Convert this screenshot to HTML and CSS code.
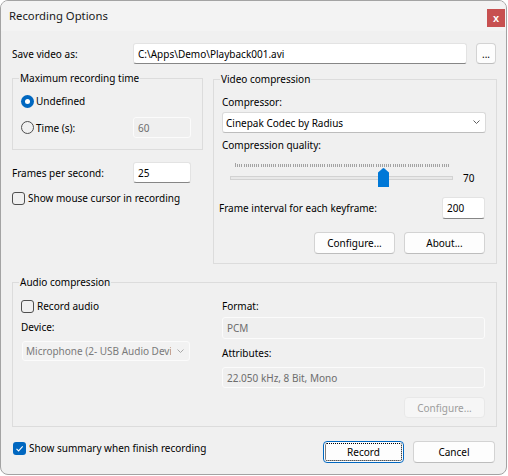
FILE: index.html
```html
<!DOCTYPE html>
<html lang="en">
<head>
    <meta charset="UTF-8">
    <meta name="viewport" content="width=device-width, initial-scale=1.0">
    <title>Recording Options</title>
    <link rel="stylesheet" href="styles.css">
</head>
<body>
<div class="window">
    <div class="titlebar">
        <span class="title">Recording Options</span>
        <button class="close">x</button>
    </div>

    <div class="content">
        <div class="row save-row">
            <label class="label-col" for="path">Save video as:</label>
            <input class="text path" type="text" id="path" value="C:\Apps\Demo\Playback001.avi">
            <button class="btn browse">...</button>
        </div>

        <div class="middle">
            <div>
                <fieldset class="group time-group">
                    <legend>Maximum recording time</legend>
                    <label class="option first"><span class="radio on"></span>Undefined</label>
                    <div class="option time-row">
                        <label class="option"><span class="radio"></span>Time (s):</label>
                        <input class="text small" type="text" value="60" disabled>
                    </div>
                </fieldset>

                <div class="row fps-row">
                    <label class="label-col" for="fps">Frames per second:</label>
                    <input class="text small" type="text" id="fps" value="25">
                </div>
                <label class="check-row cursor-check"><span class="check"></span>Show mouse cursor in recording</label>
            </div>

            <fieldset class="group video-group">
                <legend>Video compression</legend>
                <div class="field-label compressor">Compressor:</div>
                <div class="combo">
                    <span class="combo-text">Cinepak Codec by Radius</span>
                    <svg class="chevron" width="8" height="5" viewBox="0 0 8 5"><path d="M0.5 0.5L3.5 3.5L6.5 0.5"/></svg>
                </div>
                <div class="field-label quality">Compression quality:</div>
                <div class="slider-row">
                    <svg class="slider" width="235" height="36" viewBox="0 0 235 36">
                        <!-- 101 ticks, 0..100 -->
                        <path class="ticks" d="M13.5 10v4
                            m2.13-3v3 m2.13-3v3 m2.13-3v3 m2.13-3v3 m2.13-3v3 m2.13-3v3 m2.13-3v3 m2.13-3v3 m2.13-3v3 m2.13-3v3
                            m2.13-3v3 m2.13-3v3 m2.13-3v3 m2.13-3v3 m2.13-3v3 m2.13-3v3 m2.13-3v3 m2.13-3v3 m2.13-3v3 m2.13-3v3
                            m2.13-3v3 m2.13-3v3 m2.13-3v3 m2.13-3v3 m2.13-3v3 m2.13-3v3 m2.13-3v3 m2.13-3v3 m2.13-3v3 m2.13-3v3
                            m2.13-3v3 m2.13-3v3 m2.13-3v3 m2.13-3v3 m2.13-3v3 m2.13-3v3 m2.13-3v3 m2.13-3v3 m2.13-3v3 m2.13-3v3
                            m2.13-3v3 m2.13-3v3 m2.13-3v3 m2.13-3v3 m2.13-3v3 m2.13-3v3 m2.13-3v3 m2.13-3v3 m2.13-3v3 m2.13-3v3
                            m2.13-3v3 m2.13-3v3 m2.13-3v3 m2.13-3v3 m2.13-3v3 m2.13-3v3 m2.13-3v3 m2.13-3v3 m2.13-3v3 m2.13-3v3
                            m2.13-3v3 m2.13-3v3 m2.13-3v3 m2.13-3v3 m2.13-3v3 m2.13-3v3 m2.13-3v3 m2.13-3v3 m2.13-3v3 m2.13-3v3
                            m2.13-3v3 m2.13-3v3 m2.13-3v3 m2.13-3v3 m2.13-3v3 m2.13-3v3 m2.13-3v3 m2.13-3v3 m2.13-3v3 m2.13-3v3
                            m2.13-3v3 m2.13-3v3 m2.13-3v3 m2.13-3v3 m2.13-3v3 m2.13-3v3 m2.13-3v3 m2.13-3v3 m2.13-3v3 m2.13-3v3
                            m2.13-3v3 m2.13-3v3 m2.13-3v3 m2.13-3v3 m2.13-3v3 m2.13-3v3 m2.13-3v3 m2.13-3v3 m2.13-3v3 m2.13-3v3"/>
                        <rect class="track" x="8.5" y="23.5" width="222" height="3"/>
                        <path class="thumb" d="M156 34V19.5L160.6 15.4Q161.5 14.6 162.4 15.4L167 19.5V34Z"/>
                    </svg>
                    <span class="slider-value">70</span>
                </div>
                <div class="row keyframe-row">
                    <label class="keyframe-label" for="keyframe">Frame interval for each keyframe:</label>
                    <input class="text keyframe" type="text" id="keyframe" value="200">
                </div>
                <div class="button-row">
                    <button class="btn">Configure...</button>
                    <button class="btn">About...</button>
                </div>
            </fieldset>
        </div>

        <fieldset class="group audio-group">
            <legend>Audio compression</legend>
            <div class="audio-grid">
                <div>
                    <label class="check-row audio-check"><span class="check"></span>Record audio</label>
                    <div class="field-label device">Device:</div>
                    <div class="combo disabled device-combo">
                        <span class="combo-text">Microphone (2- USB Audio Device)</span>
                        <svg class="chevron" width="8" height="5" viewBox="0 0 8 5"><path d="M0.5 0.5L3.5 3.5L6.5 0.5"/></svg>
                    </div>
                </div>
                <div>
                    <div class="field-label format">Format:</div>
                    <input class="text wide format-box" type="text" value="PCM" disabled>
                    <div class="field-label attributes">Attributes:</div>
                    <input class="text wide attr-box" type="text" value="22.050 kHz, 8 Bit, Mono" disabled>
                    <div class="button-row audio-buttons">
                        <button class="btn" disabled>Configure...</button>
                    </div>
                </div>
            </div>
        </fieldset>

        <div class="footer">
            <label class="check-row summary">
                <span class="check on"><svg width="11" height="11" viewBox="0 0 11 11"><path d="M2.5 5.8L4.6 7.9L8.7 3.4"/></svg></span>Show summary when finish recording
            </label>
            <div class="footer-buttons">
                <button class="btn default record">Record</button>
                <button class="btn cancel">Cancel</button>
            </div>
        </div>
    </div>
</div>
</body>
</html>
```

FILE: styles.css
```css
body {
    margin: 0;
    background-color: #ffffff;
    font-family: "Noto Sans", sans-serif;
    font-size: 10px;
    color: #000000;
}
.window {
    width: 507px;
    height: 475px;
    box-sizing: border-box;
    border: 1px solid #a3a3a3;
    border-radius: 8px;
    background-color: #f0f0f0;
    overflow: hidden;
    display: flex;
    flex-direction: column;
}
.titlebar {
    height: 30px;
    flex-shrink: 0;
    background-color: #f3f3f3;
    display: flex;
    justify-content: space-between;
    align-items: flex-start;
}
.title {
    padding: 7px 0 0 8px;
    font-size: 11.3px;
    line-height: 16px;
    color: #1a1a1a;
}
.close {
    margin: 8px 1px 0 0;
    width: 18px;
    height: 18px;
    padding: 0;
    border: none;
    background-color: #c75050;
    color: #ffffff;
    font: bold 11px "Liberation Sans", sans-serif;
    line-height: 16px;
}
.content {
    padding: 12px 9px 0 11px;
}
.row {
    display: flex;
    align-items: center;
}
.label-col {
    width: 121px;
    flex-shrink: 0;
    line-height: 16px;
}
.text {
    box-sizing: border-box;
    height: 21px;
    margin: 0;
    padding: 0 4px;
    border: 1px solid #e3e3e3;
    border-bottom-color: #868686;
    border-radius: 3px;
    background-color: #ffffff;
    font: inherit;
    color: #000000;
    outline: none;
}
.text:disabled {
    background-color: #efefef;
    border-color: #fbfbfb;
    color: #6d6d6d;
}
.path {
    width: 334px;
}
.btn {
    box-sizing: border-box;
    height: 22px;
    padding: 0;
    border: 1px solid #d3d3d3;
    border-bottom-color: #bdbdbd;
    border-radius: 4px;
    background-color: #fdfdfd;
    font: inherit;
    color: #000000;
}
.btn:disabled {
    height: 21px;
    background-color: #f6f6f6;
    border-color: #e8e8e8;
    color: #9d9d9d;
}
.browse {
    width: 20px;
    height: 21px;
    margin-left: 9px;
}

/* two columns in the middle */
.middle {
    display: grid;
    grid-template-columns: 191px 284px;
    gap: 10px;
    margin-top: 6px;
    align-items: start;
}
.group {
    margin: 0;
    min-width: 0;
    border: 1px solid #dcdcdc;
    padding: 0 11px 0 8px;
}
.group legend {
    padding: 0 1px;
    margin-left: -2px;
    line-height: 16px;
}
.time-group {
    padding-bottom: 11px;
}
.option {
    display: flex;
    align-items: center;
    line-height: 16px;
}
.option.first {
    margin-top: 7px;
}
.time-row {
    margin-top: 8px;
    height: 21px;
}
.radio {
    width: 13px;
    height: 13px;
    box-sizing: border-box;
    flex-shrink: 0;
    margin-right: 2px;
    border: 1px solid #4f4f4f;
    border-radius: 50%;
}
.radio.on {
    border: none;
    background-color: #0067c0;
    display: flex;
    align-items: center;
    justify-content: center;
}
.radio.on::after {
    content: "";
    width: 5px;
    height: 5px;
    border-radius: 50%;
    background-color: #ffffff;
}
.small {
    width: 58px;
}
.time-row .small {
    margin-left: auto;
}
.fps-row {
    margin-top: 12px;
}
.check-row {
    display: flex;
    align-items: center;
    line-height: 16px;
}
.cursor-check {
    margin-top: 7px;
}
.check {
    width: 13px;
    height: 13px;
    box-sizing: border-box;
    flex-shrink: 0;
    margin-right: 3px;
    border: 1px solid #4f4f4f;
    border-radius: 3px;
}
.check.on {
    border: none;
    background-color: #0067c0;
    display: flex;
    align-items: center;
    justify-content: center;
}
.check.on svg path {
    fill: none;
    stroke: #ffffff;
    stroke-width: 1.1;
}

/* video compression */
.video-group {
    margin-top: 1px;
    padding-bottom: 9px;
}
.field-label {
    line-height: 16px;
}
.compressor {
    margin-top: 7px;
}
.combo {
    box-sizing: border-box;
    height: 21px;
    margin-top: 2px;
    border: 1px solid #dadada;
    border-bottom-color: #bdbdbd;
    border-radius: 3px;
    background-color: #ffffff;
    display: flex;
    align-items: center;
    width: 264px;
}
.combo-text {
    flex: 1;
    padding-left: 3px;
    white-space: nowrap;
    overflow: hidden;
}
.chevron {
    margin: 0 4px 0 6px;
}
.chevron path {
    fill: none;
    stroke: #5f5f5f;
}
.quality {
    margin-top: 4px;
}
.slider-row {
    display: flex;
    align-items: flex-start;
}
.ticks {
    stroke: #a3a3a3;
    stroke-width: 1;
    shape-rendering: crispEdges;
}
.track {
    fill: #e8e8e8;
    stroke: #d2d2d2;
}
.thumb {
    fill: #0078d7;
}
.slider-value {
    margin: 17px 0 0 6px;
    line-height: 16px;
}
.keyframe-row {
    margin-top: 8px;
}
.keyframe-label {
    margin-left: -3px;
    line-height: 16px;
}
.keyframe {
    width: 43px;
    height: 22px;
    margin-left: auto;
}
.button-row {
    display: flex;
    justify-content: flex-end;
    gap: 9px;
    margin-top: 13px;
}
.button-row .btn {
    width: 81px;
}

/* audio compression */
.audio-group {
    margin-top: 10px;
    padding: 0 12px 8px 8px;
}
.audio-grid {
    display: grid;
    grid-template-columns: 201px 1fr;
}
.audio-check {
    margin-top: 8px;
}
.device {
    margin-top: 5px;
}
.combo.disabled {
    background-color: #f2f2f2;
    border-color: #fbfbfb;
    color: #7a7a7a;
}
.device-combo {
    width: 168px;
    height: 20px;
    margin: 6px 0 0 1px;
}
.device-combo .combo-text {
    padding-left: 3px;
}
.device-combo .chevron path {
    stroke: #a8a8a8;
}
.format {
    margin-top: 8px;
}
.wide {
    display: block;
    width: 263px;
}
.format-box {
    height: 22px;
    margin-top: 3px;
}
.attributes {
    margin-top: 6px;
}
.attr-box {
    margin-top: 6px;
}
.audio-buttons {
    margin-top: 9px;
}

/* bottom row */
.footer {
    display: flex;
    align-items: flex-start;
    margin-top: 14px;
}
.summary {
    margin: -1px 0 0 1px;
}
.footer-buttons {
    display: flex;
    gap: 9px;
    margin: 0 2px 0 auto;
}
.record {
    width: 81px;
    border-color: #0067c0;
    outline: 1px dotted #000000;
    outline-offset: -3px;
}
.cancel {
    width: 82px;
}
```
